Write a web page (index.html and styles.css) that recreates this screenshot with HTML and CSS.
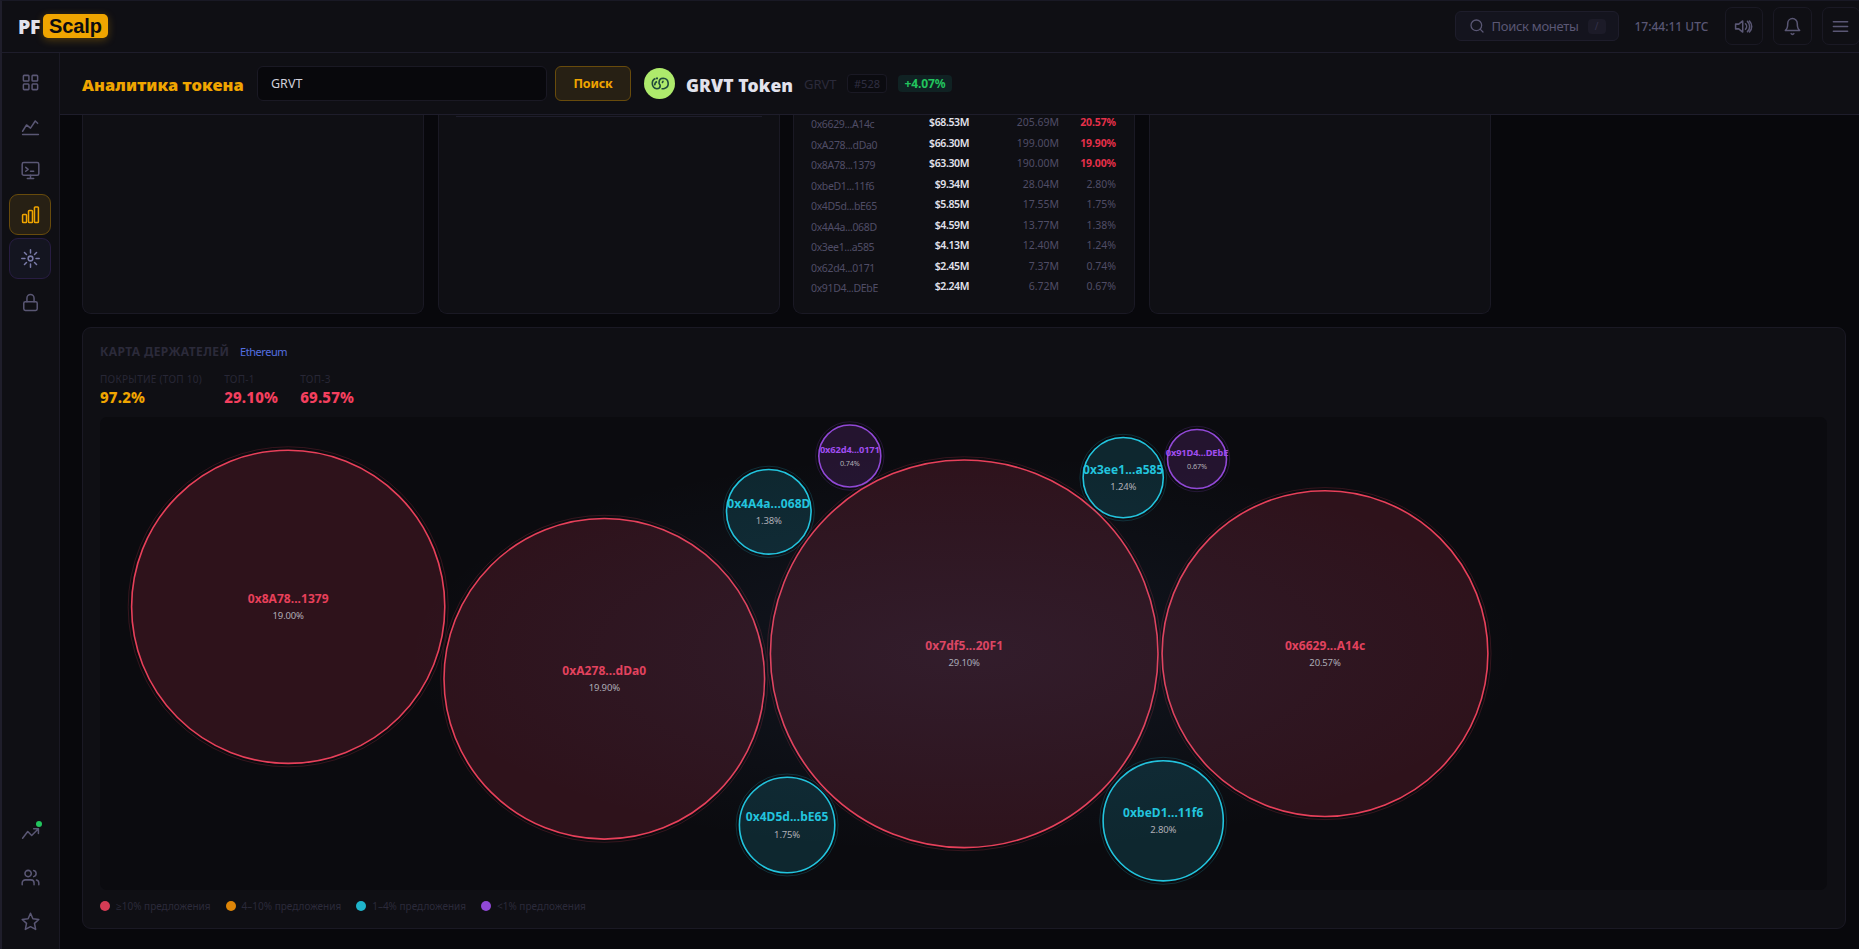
FILE: index.html
```
<!DOCTYPE html>
<html lang="ru">
<head>
<meta charset="UTF-8">
<title>PF Scalp - Аналитика токена</title>
<link rel="stylesheet" href="styles.css">
</head>
<body>

<header class="topbar">
    <div class="logo"><span class="logo-pf">PF</span><span class="logo-badge">Scalp</span></div>
    <div class="topbar-right">
        <div class="coin-search">
            <svg class="icon" width="16" height="16" viewBox="0 0 24 24"><circle cx="11" cy="11" r="8"/><path d="M21 21l-4.3-4.3"/></svg>
            <span class="coin-search-text">Поиск монеты</span>
            <span class="kbd">/</span>
        </div>
        <div class="clock">17:44:11 UTC</div>
        <button class="icon-button">
            <svg class="icon" width="19" height="19" viewBox="0 0 24 24"><path d="M11 5L6 9H2v6h4l5 4z"/><path d="M14.5 8.5a5 5 0 0 1 0 7M17 5.500a9 9 0 0 1 0 13M19.500 5a10 10 0 0 1 0 14"/></svg>
        </button>
        <button class="icon-button">
            <svg class="icon" width="19" height="19" viewBox="0 0 24 24"><path d="M18 8A6 6 0 0 0 6 8c0 7-3 9-3 9h18s-3-2-3-9"/><path d="M13.700 21a2 2 0 0 1-3.400 0"/></svg>
        </button>
        <button class="icon-button">
            <svg class="icon" width="19" height="19" viewBox="0 0 24 24"><path d="M3 6h18M3 12h18M3 18h18"/></svg>
        </button>
    </div>
</header>

<div class="layout">
    <nav class="sidebar">
        <a class="nav-item"><svg class="icon" width="19" height="19" viewBox="0 0 24 24"><rect x="3" y="3" width="7" height="7" rx="1"/><rect x="14" y="3" width="7" height="7" rx="1"/><rect x="3" y="14" width="7" height="7" rx="1"/><rect x="14" y="14" width="7" height="7" rx="1"/></svg></a>
        <a class="nav-item"><svg class="icon" width="19" height="19" viewBox="0 0 24 24"><path d="M2 18l5-8 5 4 6-9 3 3M2 22h20"/></svg></a>
        <a class="nav-item"><svg class="icon" width="19" height="19" viewBox="0 0 24 24"><rect x="1.500" y="2" width="21" height="16" rx="2"/><path d="M12 18v4M8 22h8M6 8l3 2.500L6 13M12 13h4"/></svg></a>
        <a class="nav-item active"><svg class="icon" width="19" height="19" viewBox="0 0 24 24"><rect x="2" y="12" width="5" height="10" rx="1"/><rect x="9.500" y="7" width="5" height="15" rx="1"/><rect x="17" y="2.500" width="5" height="19.500" rx="1"/></svg></a>
        <a class="nav-item accent"><svg class="icon" width="19" height="19" viewBox="0 0 24 24"><circle cx="12" cy="12" r="3"/><path d="M12 1v4M12 19v4M1 12h4M19 12h4M4.400 4.400l2.500 2.500M17.100 17.100l2.500 2.500M4.400 19.600l2.500-2.500M17.100 6.900l2.500-2.500"/></svg></a>
        <a class="nav-item"><svg class="icon" width="19" height="19" viewBox="0 0 24 24"><rect x="3.500" y="11" width="17" height="11" rx="2"/><path d="M7.500 11V6.500a4.500 4.500 0 0 1 9 0V11"/></svg></a>
        <div class="nav-spacer"></div>
        <a class="nav-item"><svg class="icon" width="19" height="19" viewBox="0 0 24 24"><path d="M2 18l6.500-8.500 5 5L22 6M16 6h6v6"/></svg><span class="nav-dot"></span></a>
        <a class="nav-item"><svg class="icon" width="19" height="19" viewBox="0 0 24 24"><circle cx="9" cy="7" r="4"/><path d="M1.500 21v-2a4 4 0 0 1 4-4h7a4 4 0 0 1 4 4v2M22.500 21v-2a4 4 0 0 0-3-3.900M16 3.100a4 4 0 0 1 0 7.800"/></svg></a>
        <a class="nav-item"><svg class="icon" width="19" height="19" viewBox="0 0 24 24"><path d="M12 1.500l3 7 7.500.9-5.500 5 1.500 7.600L12 18.500 5.500 22 7 14.400l-5.500-5 7.500-.9z"/></svg></a>
    </nav>

    <main class="page">
        <div class="toolbar">
            <h1 class="page-title">Аналитика токена</h1>
            <input class="token-input" type="text" value="GRVT">
            <button class="search-button">Поиск</button>
            <svg class="token-logo" width="31" height="31" viewBox="0 0 31 31">
                <circle cx="15.500" cy="15.500" r="15.500" fill="#aeea6c"/>
                <path d="M11.500 10.600a5.300 5.300 0 0 0 1.300 10.100c2 0 3.400-1.400 3.400-3 0-1.200-1.200-1.500-1.200-2.800 0-2.700 1.700-4.600 4.200-4.600a5.200 5.200 0 0 1 1.200 10.200c-1 .3-2 .2-2.900.2M17.800 14.800c.8-.3 1.300-1 1.300-2M10.800 17.300c-.2-1.600.6-3 2.200-3.800M12 10.400h2" fill="none" stroke="#1f4a3c" stroke-width="1.600"/>
            </svg>
            <span class="token-name">GRVT Token</span>
            <span class="token-symbol">GRVT</span>
            <span class="token-rank">#528</span>
            <span class="token-change">+4.07%</span>
        </div>

        <div class="content">
            <div class="cards">
                <section class="card"></section>
                <section class="card"><div class="card-line"></div></section>
                <section class="card">
                    <div class="holders">
                        <div class="holder"><span class="addr">0x6629...A14c</span><span class="usd">$68.53M</span><span class="amount">205.69M</span><span class="share high">20.57%</span></div>
                        <div class="holder"><span class="addr">0xA278...dDa0</span><span class="usd">$66.30M</span><span class="amount">199.00M</span><span class="share high">19.90%</span></div>
                        <div class="holder"><span class="addr">0x8A78...1379</span><span class="usd">$63.30M</span><span class="amount">190.00M</span><span class="share high">19.00%</span></div>
                        <div class="holder"><span class="addr">0xbeD1...11f6</span><span class="usd">$9.34M</span><span class="amount">28.04M</span><span class="share">2.80%</span></div>
                        <div class="holder"><span class="addr">0x4D5d...bE65</span><span class="usd">$5.85M</span><span class="amount">17.55M</span><span class="share">1.75%</span></div>
                        <div class="holder"><span class="addr">0x4A4a...068D</span><span class="usd">$4.59M</span><span class="amount">13.77M</span><span class="share">1.38%</span></div>
                        <div class="holder"><span class="addr">0x3ee1...a585</span><span class="usd">$4.13M</span><span class="amount">12.40M</span><span class="share">1.24%</span></div>
                        <div class="holder"><span class="addr">0x62d4...0171</span><span class="usd">$2.45M</span><span class="amount">7.37M</span><span class="share">0.74%</span></div>
                        <div class="holder"><span class="addr">0x91D4...DEbE</span><span class="usd">$2.24M</span><span class="amount">6.72M</span><span class="share">0.67%</span></div>
                    </div>
                </section>
                <section class="card"></section>
            </div>

            <section class="map-card">
                <div class="map-head">
                    <h2 class="map-title">КАРТА ДЕРЖАТЕЛЕЙ</h2>
                    <span class="map-chain">Ethereum</span>
                </div>
                <div class="stats">
                    <div class="stat"><div class="stat-label">ПОКРЫТИЕ (ТОП 10)</div><div class="stat-value gold">97.2%</div></div>
                    <div class="stat"><div class="stat-label">ТОП-1</div><div class="stat-value">29.10%</div></div>
                    <div class="stat"><div class="stat-label">ТОП-3</div><div class="stat-value">69.57%</div></div>
                </div>

                <svg class="bubbles" viewBox="0 0 1727 473">
                    <defs>
                        <radialGradient id="glow">
                            <stop offset="0" stop-color="#5a7dc0" stop-opacity="0.1"/>
                            <stop offset="1" stop-color="#3b82c6" stop-opacity="0"/>
                        </radialGradient>
                    </defs>
                    <g class="bubble red" transform="translate(864.2 236.8)"><circle class="ring" r="197"/><circle class="disc" r="193.800"/><text y="-4">0x7df5...20F1</text><text class="pct" y="12.500">29.10%</text></g>
                    <g class="bubble red" transform="translate(1225 236.6)"><circle class="ring" r="166"/><circle class="disc" r="162.900"/><text y="-4">0x6629...A14c</text><text class="pct" y="12.500">20.57%</text></g>
                    <g class="bubble red" transform="translate(504.3 261.8)"><circle class="ring" r="163.500"/><circle class="disc" r="160.300"/><text y="-4">0xA278...dDa0</text><text class="pct" y="12.500">19.90%</text></g>
                    <g class="bubble red" transform="translate(188.2 189.8)"><circle class="ring" r="160"/><circle class="disc" r="156.600"/><text y="-4">0x8A78...1379</text><text class="pct" y="12.500">19.00%</text></g>
                    <g class="bubble cyan" transform="translate(1063.2 403.8)"><circle class="ring" r="63.500"/><circle class="disc" r="60.100"/><text y="-4">0xbeD1...11f6</text><text class="pct" y="12.500">2.80%</text></g>
                    <g class="bubble cyan" transform="translate(687.1 408)"><circle class="ring" r="51"/><circle class="disc" r="47.700"/><text y="-4">0x4D5d...bE65</text><text class="pct" y="12.500">1.75%</text></g>
                    <g class="bubble cyan" transform="translate(668.8 94.8)"><circle class="ring" r="45.600"/><circle class="disc" r="42.300"/><text y="-3.500">0x4A4a...068D</text><text class="pct" y="12.500">1.38%</text></g>
                    <g class="bubble cyan" transform="translate(1023.2 60.6)"><circle class="ring" r="43.300"/><circle class="disc" r="40.100"/><text y="-4">0x3ee1...a585</text><text class="pct" y="12.500">1.24%</text></g>
                    <g class="bubble purple" transform="translate(749.8 39)"><circle class="ring" r="34.200"/><circle class="disc" r="31"/><text y="-2.800">0x62d4...0171</text><text class="pct" y="9.500">0.74%</text></g>
                    <g class="bubble purple" transform="translate(1097 42)"><circle class="ring" r="32.700"/><circle class="disc" r="29.500"/><text y="-2.800">0x91D4...DEbE</text><text class="pct" y="9.500">0.67%</text></g>
                    <ellipse cx="863.500" cy="236.500" rx="560" ry="200" fill="url(#glow)"/>
                </svg>

                <div class="legend">
                    <span class="legend-item"><i class="dot dot-red"></i>≥10% предложения</span>
                    <span class="legend-item"><i class="dot dot-orange"></i>4–10% предложения</span>
                    <span class="legend-item"><i class="dot dot-cyan"></i>1–4% предложения</span>
                    <span class="legend-item"><i class="dot dot-purple"></i>&lt;1% предложения</span>
                </div>
            </section>
        </div>
    </main>
</div>

</body>
</html>
```

FILE: styles.css
```
* {
    box-sizing: border-box;
}

body {
    margin: 0;
    height: 949px;
    overflow: hidden;
    display: flex;
    flex-direction: column;
    font-family: "Noto Sans", "Open Sans", sans-serif;
    font-size: 12px;
    background: #08080c;
    color: #e2e2ec;
    border-left: 2px solid #1f1e2b;
    border-top: 1px solid #191925;
}

button, input {
    font-family: inherit;
}

.icon {
    fill: none;
    stroke: currentColor;
    stroke-width: 1.9;
    stroke-linecap: round;
    stroke-linejoin: round;
    flex-shrink: 0;
}

/* Top bar */
.topbar {
    height: 52px;
    flex-shrink: 0;
    display: flex;
    align-items: center;
    justify-content: space-between;
    padding: 0 0 1px 16px;
    background: #0f0f14;
    border-bottom: 1px solid #1e1d2b;
}

.logo {
    display: flex;
    align-items: center;
    gap: 2px;
    font-size: 19.5px;
    font-weight: 900;
    letter-spacing: -0.3px;
}

.logo-pf {
    width: 23px;
}

.logo-badge {
    width: 65px;
    height: 24px;
    line-height: 24px;
    text-align: center;
    border-radius: 5px;
    background: #f0a500;
    color: #0c0c10;
    font-family: "Liberation Sans", sans-serif;
    font-weight: bold;
    font-size: 20px;
    letter-spacing: -0.1px;
    box-shadow: 0 2px 8px rgba(240, 165, 0, 0.3);
}

.topbar-right {
    display: flex;
    align-items: center;
    gap: 10px;
    color: #5a5774;
}

.coin-search {
    width: 164px;
    height: 30px;
    display: flex;
    align-items: center;
    padding-left: 13px;
    background: #14141e;
    border: 1px solid #1e1d2b;
    border-radius: 6px;
    font-size: 13px;
}

.coin-search-text {
    width: 87px;
    margin: 0 9px 0 7px;
    white-space: nowrap;
    letter-spacing: -0.3px;
}

.kbd {
    width: 18px;
    height: 15px;
    line-height: 15px;
    text-align: center;
    font-size: 10px;
    border-radius: 4px;
    background: #1c1b28;
    color: #34324a;
}

.clock {
    width: 75px;
    margin: 0 5px 0 6px;
    font-size: 12px;
    font-weight: 500;
    white-space: nowrap;
}

.icon-button {
    width: 38.5px;
    height: 38px;
    display: flex;
    align-items: center;
    justify-content: center;
    padding: 0;
    background: none;
    border: 1px solid #1a1924;
    border-radius: 7px;
    color: #5a5774;
}

.icon-button:last-child {
    margin-right: -1px;
}

/* Sidebar */
.layout {
    flex: 1;
    min-height: 0;
    display: flex;
}

.sidebar {
    width: 58px;
    flex-shrink: 0;
    display: flex;
    flex-direction: column;
    align-items: center;
    gap: 3px;
    padding: 9px 1px 7px 0;
    background: #0f0f14;
    border-right: 1px solid #1a1924;
}

.nav-item {
    position: relative;
    width: 42px;
    height: 41px;
    display: flex;
    align-items: center;
    justify-content: center;
    border: 1px solid transparent;
    border-radius: 9px;
    color: #5a5774;
}

.nav-item.active {
    background: #272014;
    border-color: #684b0c;
    color: #f0a500;
}

.nav-item.accent {
    background: #141520;
    border-color: #281d42;
    color: #7a7ba8;
}

.nav-spacer {
    flex: 1;
}

.nav-dot {
    position: absolute;
    top: 7px;
    right: 8px;
    width: 6px;
    height: 6px;
    border-radius: 50%;
    background: #22c55e;
}

/* Token toolbar */
.page {
    flex: 1;
    min-width: 0;
    display: flex;
    flex-direction: column;
}

.toolbar {
    height: 62px;
    flex-shrink: 0;
    display: flex;
    align-items: center;
    padding-left: 22px;
    background: #0f0f14;
    border-bottom: 1px solid #1e1d2b;
}

.page-title {
    width: 175px;
    margin: 2px 0 0;
    font-size: 16.5px;
    font-weight: 900;
    letter-spacing: 0.05px;
    white-space: nowrap;
    color: #f0a500;
}

.token-input {
    width: 290px;
    height: 35px;
    padding: 0 13px;
    background: #08080c;
    border: 1px solid #1a1924;
    border-radius: 6px;
    color: #d0d0da;
    font-size: 12.5px;
}

.search-button {
    width: 76px;
    height: 35px;
    margin: 0 13px 0 8px;
    padding: 0;
    background: #272014;
    border: 1px solid #684b0c;
    border-radius: 6px;
    color: #f0a500;
    font-size: 12.5px;
    font-weight: 700;
    letter-spacing: -0.2px;
}

.token-name {
    width: 107px;
    margin: 2px 11px 0;
    font-size: 17.5px;
    font-weight: 900;
    letter-spacing: 0.1px;
    white-space: nowrap;
}

.token-symbol {
    width: 32px;
    font-size: 13px;
    color: #2b2a3a;
}

.token-rank {
    width: 40px;
    height: 19px;
    line-height: 17px;
    margin: 0 11px;
    text-align: center;
    background: #0b0b10;
    border: 1px solid #1a1924;
    border-radius: 4px;
    color: #2f2e40;
    font-size: 11px;
}

.token-change {
    width: 54px;
    height: 17px;
    line-height: 17px;
    text-align: center;
    background: #102223;
    border-radius: 4px;
    color: #22c55e;
    font-size: 12px;
    font-weight: 700;
    letter-spacing: -0.1px;
}

/* Cards */
.content {
    padding: 0 13px 0 22px;
}

.cards {
    display: grid;
    grid-template-columns: repeat(5, 1fr);
    gap: 13.5px;
}

.card {
    height: 199px;
    padding: 0 17px;
    background: #0f0f14;
    border: 1px solid #1a1924;
    border-top: none;
    border-radius: 0 0 9px 9px;
}

.card-line {
    margin-top: 1px;
    height: 1px;
    background: #1e1d2b;
}

.holders {
    margin-top: -3px;
}

.holder {
    display: grid;
    grid-template-columns: 83px 75px 90px 57px;
    align-items: center;
    height: 20.5px;
    font-size: 10.5px;
    letter-spacing: 0;
    text-align: right;
    color: #4f4d66;
}

.addr {
    padding-top: 4px;
    text-align: left;
    letter-spacing: -0.35px;
}

.usd {
    color: #e2e2ec;
    font-weight: 600;
    letter-spacing: -0.4px;
}

.high {
    color: #e5304a;
    font-weight: 700;
    letter-spacing: -0.1px;
}

/* Holders map */
.map-card {
    height: 602px;
    margin-top: 13px;
    padding: 14px 17px 0;
    background: #0f0f14;
    border: 1px solid #1a1924;
    border-radius: 9px;
}

.map-head {
    display: flex;
    align-items: center;
    height: 19px;
}

.map-title {
    width: 140px;
    margin: 0;
    font-size: 12px;
    font-weight: 700;
    letter-spacing: 0.4px;
    white-space: nowrap;
    color: #2b2a3a;
}

.map-chain {
    font-size: 11px;
    letter-spacing: -0.45px;
    color: #5470e0;
}

.stats {
    display: flex;
    gap: 22px;
    height: 56px;
    padding-top: 11px;
}

.stat-label {
    height: 15px;
    line-height: 15px;
    font-size: 10px;
    letter-spacing: 0.28px;
    color: #282736;
}

.stat-value {
    line-height: 21px;
    font-size: 15px;
    font-weight: 800;
    letter-spacing: 0.2px;
    color: #f43f5e;
}

.stat-value.gold {
    color: #f0a500;
}

.bubbles {
    display: block;
    width: 1727px;
    height: 473px;
    background: #0b0b0f;
    border-radius: 7px;
}

.bubble text {
    text-anchor: middle;
    font-size: 12px;
    font-weight: 700;
    letter-spacing: 0.05px;
    fill: var(--tone);
}

.bubble .pct {
    font-size: 9.5px;
    font-weight: 400;
    letter-spacing: -0.15px;
    fill: #b0aeb5;
}

.bubble.purple text {
    font-size: 9.3px;
    letter-spacing: -0.15px;
}

.bubble.purple .pct {
    font-size: 7.3px;
}

.disc {
    fill: var(--fill);
    stroke: var(--tone);
    stroke-width: 1.6;
}

.ring {
    fill: none;
    stroke: var(--tone);
    opacity: 0.2;
}

.red {
    --tone: #e8405a;
    --fill: #2e121b;
}

.cyan {
    --tone: #22c5de;
    --fill: #0e272f;
}

.purple {
    --tone: #9148d6;
    --fill: #24142f;
}

.bubble.purple text:not(.pct) {
    fill: #a04df0;
}

.legend {
    display: flex;
    gap: 15px;
    margin-top: 8px;
    font-size: 10px;
    line-height: 16px;
    color: #2b2a3a;
}

.legend-item {
    display: flex;
    align-items: center;
    gap: 6px;
}

.dot {
    width: 10px;
    height: 10px;
    border-radius: 50%;
}

.dot-red {
    background: #d63c55;
}

.dot-orange {
    background: #dd8508;
}

.dot-cyan {
    background: #1fb4cb;
}

.dot-purple {
    background: #9148d6;
}
```
